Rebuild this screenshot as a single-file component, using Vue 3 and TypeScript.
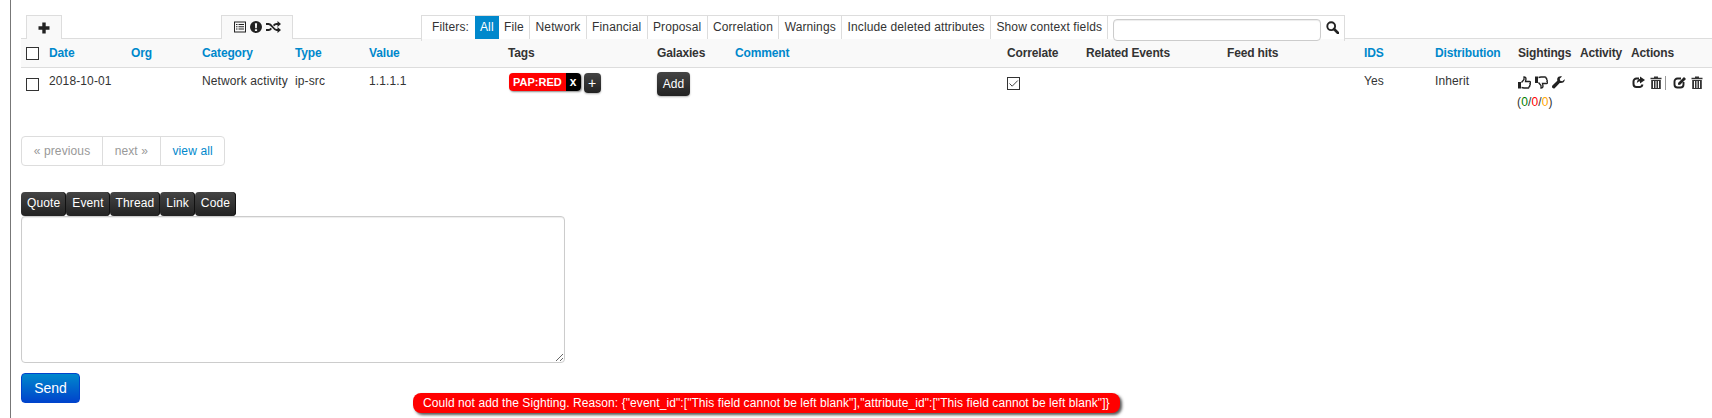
<script setup lang="ts">
import { ref } from 'vue'

// table columns, widths are shared by header and row
const columns = [
  { label: 'Date', link: true, width: 82 },
  { label: 'Org', link: true, width: 71 },
  { label: 'Category', link: true, width: 93 },
  { label: 'Type', link: true, width: 74 },
  { label: 'Value', link: true, width: 139 },
  { label: 'Tags', link: false, width: 149 },
  { label: 'Galaxies', link: false, width: 78 },
  { label: 'Comment', link: true, width: 272 },
  { label: 'Correlate', link: false, width: 79 },
  { label: 'Related Events', link: false, width: 141 },
  { label: 'Feed hits', link: false, width: 137 },
  { label: 'IDS', link: true, width: 71 },
  { label: 'Distribution', link: true, width: 83 },
  { label: 'Sightings', link: false, width: 62 },
  { label: 'Activity', link: false, width: 51 },
  { label: 'Actions', link: false, width: 81 }
]

const gridColumns = '23px ' + columns.map(c => c.width + 'px').join(' ')

const filters = ['All', 'File', 'Network', 'Financial', 'Proposal', 'Correlation', 'Warnings', 'Include deleted attributes', 'Show context fields']
const activeFilter = ref('All')
const search = ref('')
const comment = ref('')
const toolbar = ['Quote', 'Event', 'Thread', 'Link', 'Code']
</script>

<template>
  <div class="page">
    <div class="tabs">
      <div class="tab tab-add">
        <svg width="12" height="12" viewBox="0 0 12 12"><path d="M4.3 0.5h3.4v3.8h3.8v3.4H7.7v3.8H4.3V7.7H0.5V4.3h3.8z" fill="#222" /></svg>
      </div>
      <div class="tab tab-icons">
        <svg width="12" height="12" viewBox="0 0 12 12"><path fill-rule="evenodd" d="M0 0.5h12v11H0zM1 1.5v9h10v-9zM2 3h1.5v1H2zM4.5 3H10v1H4.5zM2 5.2h1.5v1H2zM4.5 5.2H10v1H4.5zM2 7.4h1.5v1H2zM4.5 7.4H10v1H4.5z" fill="#222" /></svg>
        <svg width="12" height="12" viewBox="0 0 12 12"><path fill-rule="evenodd" d="M6 0a6 6 0 1 0 0 12A6 6 0 0 0 6 0zM4.9 2.2h2.2L6.8 7.2H5.2zM4.9 8.2h2.2v1.9H4.9z" fill="#222" /></svg>
        <svg width="15" height="12" viewBox="0 0 15 12"><path d="M0 3h2.6c3.4 0 4.6 6 8 6h1.4M0 9h2.6c1.2 0 2-.7 2.7-1.6M7.6 4.6C8.3 3.700 9.200 3 10.600 3h1.400" fill="none" stroke="#222" stroke-width="1.800" /><path d="M11.500 0l3.500 3-3.500 3zM11.500 6l3.500 3-3.500 3z" fill="#222" /></svg>
      </div>
      <div class="filter-bar">
        <span class="filter-label">Filters:</span>
        <span
          v-for="f in filters"
          :key="f"
          class="filter"
          :class="{ active: f === activeFilter }"
          @click="activeFilter = f"
        >{{ f }}</span>
        <div class="filter-search">
          <input v-model="search" type="text" class="search-input">
          <svg width="13" height="13" viewBox="0 0 13 13"><circle cx="5.200" cy="5.200" r="3.900" fill="none" stroke="#222" stroke-width="1.900" /><path d="M8 8l4 4" stroke="#222" stroke-width="2.600" stroke-linecap="round" /></svg>
        </div>
      </div>
    </div>

    <div class="grid grid-head" :style="{ gridTemplateColumns: gridColumns }">
      <input type="checkbox" class="check">
      <span v-for="c in columns" :key="c.label" :class="{ link: c.link }">{{ c.label }}</span>
    </div>

    <div class="grid grid-row" :style="{ gridTemplateColumns: gridColumns }">
      <input type="checkbox" class="check">
      <span>2018-10-01</span>
      <span></span>
      <span>Network activity</span>
      <span>ip-src</span>
      <span>1.1.1.1</span>
      <div class="tags">
        <span class="tag"><span class="tag-name">PAP:RED</span><span class="tag-x">x</span></span>
        <span class="dark-btn tag-plus">+</span>
      </div>
      <div><span class="dark-btn add-btn">Add</span></div>
      <span></span>
      <span class="check checked">
        <svg width="11" height="11" viewBox="0 0 11 11"><path d="M1.500 5.500l2.700 2.700L9.800 2.500" fill="none" stroke="#444" stroke-width="1" /></svg>
      </span>
      <span></span>
      <span></span>
      <span>Yes</span>
      <span>Inherit</span>
      <div class="sightings">
        <div class="icon-row">
          <svg width="13" height="13" viewBox="0 0 13 13"><path d="M0 6h3v6.500H0z" fill="#222" /><path d="M3.500 6.500L6 3.500V1c1.500 0 2 1 2 2L7.500 5.500h4c1.200 0 1.200 1.500.5 2 .5.700.3 1.400-.3 1.800.2.700-.1 1.300-.7 1.500.1.800-.4 1.200-1 1.200H6L3.500 11.500" fill="none" stroke="#222" stroke-width="1.300" /></svg>
          <svg width="13" height="13" viewBox="0 0 13 13"><g transform="matrix(1 0 0 -1 0 13)"><path d="M0 6h3v6.500H0z" fill="#222" /><path d="M3.500 6.500L6 3.500V1c1.500 0 2 1 2 2L7.500 5.500h4c1.200 0 1.200 1.500.5 2 .5.700.3 1.400-.3 1.800.2.700-.1 1.300-.7 1.500.1.800-.4 1.200-1 1.200H6L3.500 11.500" fill="none" stroke="#222" stroke-width="1.300" /></g></svg>
          <svg width="13" height="13" viewBox="0 0 13 13"><path d="M12.700 3.200L10.300 5.300 8.200 4.700 7.700 2.700 10 .4C8-.3 5.800.6 5.300 2.500c-.2.700-.1 1.500 0 2.200L.4 9.600c-.6.700-.5 1.800.2 2.400.7.600 1.700.6 2.300-.1l4.800-4.900c2.700.6 5.500-1.100 5-3.800z" fill="#222" /></svg>
        </div>
        <div class="sighting-count">(<span class="c-green">0</span>/<span class="c-red">0</span>/<span class="c-orange">0</span>)</div>
      </div>
      <span></span>
      <div class="actions">
        <svg width="13" height="13" viewBox="0 0 13 13"><path d="M7 2.500H4.500a3 3 0 0 0-3 3v2.500a3 3 0 0 0 3 3H8a3 3 0 0 0 2.500-2.500" fill="none" stroke="#222" stroke-width="2" /><path d="M8 0.500L13 4 8 7.500V5.500C6.500 5.500 5.500 6 4.800 7.500 4.800 4.800 6 3 8 2.700z" fill="#222" /></svg>
        <svg width="12" height="13" viewBox="0 0 12 13"><path fill-rule="evenodd" d="M0.500 1.800h3.500V0.500h4v1.300h3.500v1.400H0.500zM1.200 4h9.600v9H1.200zM3 5v7h1V5zM5.500 5v7h1V5zM8 5v7h1V5z" fill="#333" /></svg>
        <span class="divider"></span>
        <svg width="13" height="13" viewBox="0 0 13 13"><path d="M8 2.500H4.500a3 3 0 0 0-3 3v3a3 3 0 0 0 3 3h3a3 3 0 0 0 3-3V6" fill="none" stroke="#222" stroke-width="1.900" /><path d="M5 7l.2 2 2-.2L13 3 11 1z" fill="#222" /></svg>
        <svg width="12" height="13" viewBox="0 0 12 13"><path fill-rule="evenodd" d="M0.500 1.800h3.500V0.500h4v1.300h3.500v1.400H0.500zM1.200 4h9.600v9H1.200zM3 5v7h1V5zM5.500 5v7h1V5zM8 5v7h1V5z" fill="#333" /></svg>
      </div>
    </div>

    <ul class="pagination">
      <li class="disabled">« previous</li>
      <li class="disabled">next »</li>
      <li class="link">view all</li>
    </ul>

    <div class="toolbar">
      <span v-for="t in toolbar" :key="t" class="tool">{{ t }}</span>
    </div>
    <textarea v-model="comment" class="comment"></textarea>
    <button class="send">Send</button>

    <div class="flash">Could not add the Sighting. Reason: {"event_id":["This field cannot be left blank"],"attribute_id":["This field cannot be left blank"]}</div>
  </div>
</template>

<style scoped>
.page {
  position: relative;
  box-sizing: border-box;
  width: 1702px;
  height: 418px;
  margin-left: 10px;
  padding: 15px 0 0 10px;
  border-left: 1px solid #777;
  overflow: hidden;
  font-family: "Liberation Sans", Arial, sans-serif;
  font-size: 12px;
  letter-spacing: 0.12px;
  color: #333;
}

.tabs {
  display: flex;
  height: 23px;
  border-bottom: 1px solid #ddd;
}

.tab {
  box-sizing: border-box;
  height: 24px;
  display: flex;
  align-items: center;
  justify-content: center;
  gap: 4px;
  background: #f9f9f9;
  border: 1px solid #ddd;
  border-bottom: none;
}

.tab-add {
  width: 36px;
  margin-left: 5px;
}

.tab-icons {
  width: 72px;
  margin-left: 159px;
  padding-bottom: 2px;
}

.filter-bar {
  position: relative;
  z-index: 1;
  box-sizing: border-box;
  display: flex;
  align-items: flex-start;
  height: 26px;
  width: 924px;
  margin-left: 128px;
  border: 1px solid #ddd;
  border-bottom: none;
}

.filter-label,
.filter,
.filter-search {
  box-sizing: border-box;
  height: 23px;
  line-height: 23px;
  background: #fff;
}

.filter-label {
  width: 53px;
  padding-left: 10px;
  white-space: nowrap;
}

.filter {
  padding: 0 5.35px;
  border-right: 1px solid #ddd;
  white-space: nowrap;
  cursor: pointer;
}

.filter.active {
  background: #0088cc;
  color: #fff;
  border-right: none;
  padding: 0 5px;
}

.filter-search {
  flex: 1;
  display: flex;
  align-items: flex-start;
  padding-left: 5px;
  gap: 5px;
}

.filter-search svg {
  margin-top: 5px;
}

.search-input {
  box-sizing: border-box;
  width: 208px;
  height: 22px;
  margin: 3px 0 0;
  border: 1px solid #ccc;
  border-radius: 4px;
  background: #fff;
  box-shadow: inset 0 1px 1px rgba(0, 0, 0, 0.075);
}

.grid {
  display: grid;
  padding-left: 5px;
}

.grid-head {
  height: 28px;
  background: #f9f9f9;
  border-bottom: 1px solid #ddd;
  align-items: center;
  font-weight: bold;
  letter-spacing: -0.15px;
}

.grid-row {
  align-items: start;
  padding-top: 5px;
  line-height: 16px;
}

.link {
  color: #0088cc;
}

.check {
  appearance: none;
  box-sizing: border-box;
  width: 13px;
  height: 13px;
  margin: 0;
  border: 1px solid #333;
  background: #fff;
  display: block;
}

.grid-row > input.check {
  margin-top: 5px;
}

.checked {
  display: flex;
  align-items: center;
  justify-content: center;
  margin-top: 4px;
}

.tags {
  display: flex;
  align-items: flex-start;
  gap: 3px;
  padding-left: 1px;
}

.tag {
  display: flex;
  height: 18px;
  line-height: 18px;
  font-size: 11px;
  font-weight: bold;
  letter-spacing: 0;
  color: #fff;
  border-radius: 4px;
  box-shadow: 1px 1px 2px #888;
  overflow: hidden;
}

.tag-name {
  background: #f00;
  padding: 0 4px;
}

.tag-x {
  background: #000;
  width: 15px;
  text-align: center;
  font-size: 12px;
}

.dark-btn {
  display: inline-block;
  color: #fff;
  background: linear-gradient(#444, #222);
  border-radius: 4px;
  text-align: center;
  box-shadow: 0 1px 2px rgba(0, 0, 0, 0.3);
}

.tag-plus {
  width: 17px;
  height: 20px;
  line-height: 21px;
  font-size: 14px;
}

.add-btn {
  width: 33px;
  height: 24px;
  line-height: 24px;
  margin-top: -1px;
}

.sightings {
  margin-top: 3px;
}

.icon-row {
  display: flex;
  gap: 4px;
}

.sighting-count {
  margin-top: 5px;
  margin-left: -1px;
  color: #333;
}

.c-green { color: green; }
.c-red { color: red; }
.c-orange { color: orange; }

.actions {
  display: flex;
  align-items: flex-start;
  gap: 5px;
  margin-top: 3px;
  margin-left: 1px;
}

.divider {
  width: 1px;
  height: 14px;
  background: #999;
  margin: 0 2px 0 -2px;
}

.pagination {
  display: flex;
  width: fit-content;
  height: 30px;
  box-sizing: border-box;
  margin: 26px 0 0;
  padding: 0;
  list-style: none;
  border: 1px solid #ddd;
  border-radius: 4px;
  line-height: 28px;
}

.pagination li {
  padding: 0 11.7px;
  border-right: 1px solid #ddd;
}

.pagination li:last-child {
  border-right: none;
}

.pagination .disabled {
  color: #999;
}

.toolbar {
  display: flex;
  margin-top: 26px;
  height: 24px;
}

.tool {
  padding: 0 6px;
  line-height: 22px;
  color: #fff;
  background: linear-gradient(#444, #222);
  border-radius: 4px;
  box-shadow: inset -1px 0 0 #111;
}

.comment {
  display: block;
  box-sizing: border-box;
  width: 544px;
  height: 147px;
  margin: 0;
  border: 1px solid #ccc;
  border-radius: 4px;
  background: #fff;
  box-shadow: inset 0 1px 1px rgba(0, 0, 0, 0.075);
}

.send {
  display: block;
  width: 59px;
  height: 30px;
  margin-top: 10px;
  padding: 0;
  border: 1px solid #04c;
  border-radius: 4px;
  color: #fff;
  font: 14px "Liberation Sans", Arial, sans-serif;
  background: linear-gradient(#0088cc, #0044cc);
}

.flash {
  position: absolute;
  left: 402px;
  top: 393px;
  height: 20px;
  line-height: 20px;
  padding: 0 10px;
  white-space: nowrap;
  letter-spacing: 0.07px;
  color: #fff;
  background: #f00;
  border-radius: 8px;
  box-shadow: 2px 2px 3px #555;
}
</style>

<style>
body {
  background: #fff;
}
</style>
